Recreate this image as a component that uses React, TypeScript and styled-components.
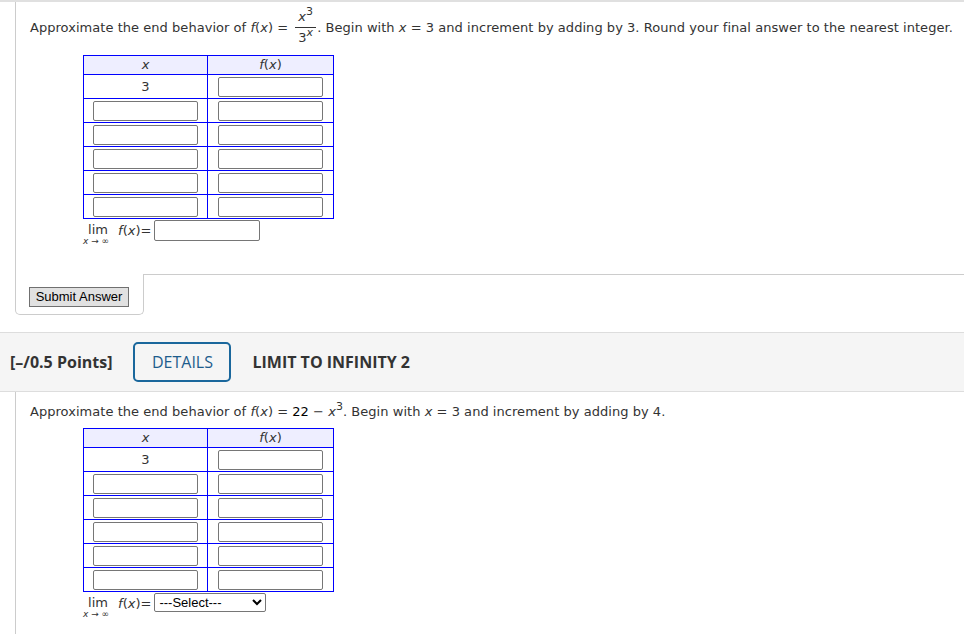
import React from 'react';
import styled, { createGlobalStyle } from 'styled-components';

const GlobalStyle = createGlobalStyle`
  body {
    margin: 0;
    background: #fff;
    font-family: "DejaVu Sans", Verdana, sans-serif;
    color: #333;
  }
`;

// Стилі сторінки
const Page = styled.div`
  width: 964px;
  min-height: 634px;
  border-top: 2px solid #e0e0e0;
  box-sizing: border-box;
  overflow: hidden;
`;

const QuestionBody = styled.div<{ $fill?: boolean }>`
  margin-left: 15px;
  border-left: 1px solid #ccc;
  padding: ${(p) => (p.$fill ? '12px 0 40px 14px' : '7px 0 27px 14px')};
`;

const Prompt = styled.p`
  margin: 0;
  font-size: 13px;
  line-height: 16px;
  letter-spacing: 0.04px;
  color: #333;
  white-space: nowrap;
`;

const I = styled.i`
  font-style: italic;
`;

const Dark = styled.span`
  color: #000;
`;

const Sup = styled.sup`
  font-size: 11px;
  line-height: 0;
  vertical-align: 6px;
`;

const Frac = styled.span`
  display: inline-flex;
  flex-direction: column;
  align-items: center;
  vertical-align: middle;
  margin: 0 1px 0 3px;
  text-align: center;
`;

const Num = styled.span`
  padding: 0 3px 3px;
  line-height: 15px;
  border-bottom: 1px solid #333;
`;

const Den = styled.span`
  padding: 2px 3px 2px;
  line-height: 15px;
`;

const TableWrap = styled.div<{ $top: number }>`
  margin: ${(p) => p.$top}px 0 0 53px;
`;

const Grid = styled.table`
  border-collapse: collapse;
  border: 1px solid #0000ff;
  font-size: 13px;
  color: #333;
`;

const HeadCell = styled.th<{ $w: number }>`
  width: ${(p) => p.$w}px;
  height: 18px;
  padding: 0;
  background: #eeeeff;
  border: 1px solid #0000ff;
  font-weight: normal;
  font-size: 13px;
  line-height: 16px;
`;

const Cell = styled.td`
  height: 23px;
  padding: 0;
  border: 1px solid #0000ff;
  text-align: center;
  vertical-align: middle;
`;

const Box = styled.input.attrs({ type: 'text' })<{ $w?: number; $h?: number }>`
  display: block;
  margin: 0 auto;
  box-sizing: border-box;
  width: ${(p) => p.$w ?? 105}px;
  height: ${(p) => p.$h ?? 20}px;
  border: 1px solid #767676;
  border-radius: 2px;
  background: #fff;
  padding: 1px 2px;
  font-size: 13px;
`;

const LimRow = styled.div`
  display: flex;
  align-items: flex-start;
  margin: 1px 0 0 57px;
  font-size: 13px;
  color: #333;
`;

const Lim = styled.span`
  display: inline-flex;
  flex-direction: column;
  align-items: center;
  margin-top: 3px;
  line-height: 13px;
`;

const LimSub = styled.span`
  font-size: 9px;
  line-height: 11px;
  font-style: italic;
  margin-left: -4px;
`;

const FnLabel = styled.span`
  margin: 3px 3px 0 9px;
  line-height: 16px;
`;

const Picker = styled.select`
  box-sizing: border-box;
  width: 112px;
  height: 19px;
  font-family: "Liberation Sans", Arial, sans-serif;
  font-size: 13px;
  color: #000;
  border: 1px solid #767676;
  border-radius: 2px;
  background: #fff;
  padding: 0;
`;

const Footer = styled.div`
  display: flex;
  margin-left: 15px;
`;

const SubmitTab = styled.div`
  box-sizing: border-box;
  width: 129px;
  height: 41px;
  border: 1px solid #ccc;
  border-top: none;
  border-radius: 0 0 5px 5px;
  padding: 12px 0 0 13px;
`;

const FooterLine = styled.div`
  flex: 1;
  border-top: 1px solid #ccc;
`;

const SubmitButton = styled.button`
  box-sizing: border-box;
  width: 100px;
  height: 20px;
  padding: 0;
  font-family: "Liberation Sans", Arial, sans-serif;
  font-size: 13px;
  color: #000;
  background: #e1e1e1;
  border: 1px solid #707070;
  border-radius: 0;
`;

const HeaderBar = styled.div`
  display: flex;
  align-items: center;
  gap: 21px;
  margin-top: 17px;
  padding: 9px 10px;
  background: #f5f5f5;
  border-top: 1px solid #ddd;
  border-bottom: 1px solid #ddd;
  font-family: "Open Sans", "Noto Sans", sans-serif;
  font-size: 16px;
  color: #333;
`;

const Points = styled.span`
  font-weight: 700;
`;

const DetailsButton = styled.button`
  box-sizing: border-box;
  width: 98px;
  height: 40px;
  border: 2px solid #1a679c;
  border-radius: 5px;
  background: transparent;
  color: #1d5c8c;
  font-family: "Open Sans", "Noto Sans", sans-serif;
  font-size: 16px;
  padding: 0;
`;

const Title = styled.span`
  font-weight: 700;
`;

type Row = { x?: string };

const rows: Row[] = [{ x: '3' }, {}, {}, {}, {}, {}];

const ValueTable: React.FC<{ top: number }> = ({ top }) => (
  <TableWrap $top={top}>
    <Grid>
      <thead>
        <tr>
          <HeadCell $w={123}>
            <I>x</I>
          </HeadCell>
          <HeadCell $w={125}>
            <I>f</I>(<I>x</I>)
          </HeadCell>
        </tr>
      </thead>
      <tbody>
        {rows.map((r, i) => (
          <tr key={i}>
            <Cell>{r.x ? r.x : <Box />}</Cell>
            <Cell>
              <Box />
            </Cell>
          </tr>
        ))}
      </tbody>
    </Grid>
  </TableWrap>
);

const LimLabel: React.FC = () => (
  <>
    <Lim>
      lim
      <LimSub>x → ∞</LimSub>
    </Lim>
    <FnLabel>
      <I>f</I>(<I>x</I>)=
    </FnLabel>
  </>
);

const App: React.FC = () => {
  return (
    <>
      <GlobalStyle />
      <Page>
        <QuestionBody>
          <Prompt>
            Approximate the end behavior of <I>f</I>(<I>x</I>) ={' '}
            <Frac>
              <Num>
                <I>x</I>
                <Sup>3</Sup>
              </Num>
              <Den>
                3<Sup><I>x</I></Sup>
              </Den>
            </Frac>
            . Begin with <I>x</I> = 3 and increment by adding by 3. Round your final answer to the nearest
            integer.
          </Prompt>
          <ValueTable top={8} />
          <LimRow>
            <LimLabel />
            <Box $w={106} $h={21} style={{ margin: 0 }} />
          </LimRow>
        </QuestionBody>
        <Footer>
          <SubmitTab>
            <SubmitButton type="button">Submit Answer</SubmitButton>
          </SubmitTab>
          <FooterLine />
        </Footer>

        <HeaderBar>
          <Points>[–/0.5 Points]</Points>
          <DetailsButton type="button">DETAILS</DetailsButton>
          <Title>LIMIT TO INFINITY 2</Title>
        </HeaderBar>

        <QuestionBody $fill>
          <Prompt>
            Approximate the end behavior of <I>f</I>(<I>x</I>) = <Dark>22</Dark> − <I>x</I>
            <Sup>3</Sup>. Begin with <I>x</I> = 3 and increment by adding by 4.
          </Prompt>
          <ValueTable top={8} />
          <LimRow>
            <LimLabel />
            <Picker defaultValue="">
              <option value="">---Select---</option>
              <option value="inf">∞</option>
              <option value="-inf">−∞</option>
              <option value="dne">DNE</option>
            </Picker>
          </LimRow>
        </QuestionBody>
      </Page>
    </>
  );
};

export default App;
